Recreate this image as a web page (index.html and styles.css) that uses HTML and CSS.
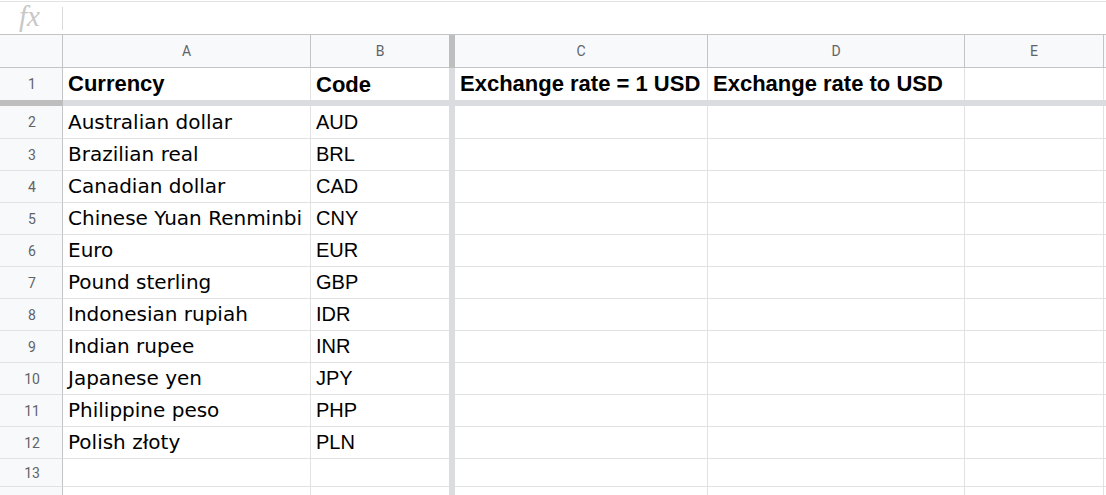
FILE: index.html
```html
<!DOCTYPE html>
<html lang="en">
<head>
  <meta charset="UTF-8">
  <link rel="stylesheet" href="styles.css">
  <title>Currencies</title>
</head>
<body>
  <div class="formula-bar">
    <div class="fx">fx</div>
    <div class="formula-input"></div>
  </div>
  <div class="sheet">
    <!-- column headers -->
    <div class="corner"></div>
    <div class="col-head">A</div>
    <div class="col-head last-frozen">B</div>
    <div class="bar-dark"></div>
    <div class="col-head">C</div>
    <div class="col-head">D</div>
    <div class="col-head">E</div>
    <div class="col-head rest"></div>

    <!-- row 1 -->
    <div class="row-head no-bottom">1</div>
    <div class="cell title no-bottom">Currency</div>
    <div class="cell title code no-bottom last-frozen">Code</div>
    <div class="bar-light"></div>
    <div class="cell title no-bottom">Exchange rate = 1 USD</div>
    <div class="cell title no-bottom">Exchange rate to USD</div>
    <div class="cell no-bottom"></div>
    <div class="cell rest no-bottom"></div>

    <!-- frozen row divider -->
    <div class="hbar-dark"></div>
    <div class="hbar-light"></div>
    <div class="vbar"></div>

    <div class="row-head">2</div>
    <div class="cell name">Australian dollar</div>
    <div class="cell code last-frozen">AUD</div>
    <div class="cell"></div><div class="cell"></div><div class="cell"></div><div class="cell rest"></div>

    <div class="row-head">3</div>
    <div class="cell name">Brazilian real</div>
    <div class="cell code last-frozen">BRL</div>
    <div class="cell"></div><div class="cell"></div><div class="cell"></div><div class="cell rest"></div>

    <div class="row-head">4</div>
    <div class="cell name">Canadian dollar</div>
    <div class="cell code last-frozen">CAD</div>
    <div class="cell"></div><div class="cell"></div><div class="cell"></div><div class="cell rest"></div>

    <div class="row-head">5</div>
    <div class="cell name">Chinese Yuan Renminbi</div>
    <div class="cell code last-frozen">CNY</div>
    <div class="cell"></div><div class="cell"></div><div class="cell"></div><div class="cell rest"></div>

    <div class="row-head">6</div>
    <div class="cell name">Euro</div>
    <div class="cell code last-frozen">EUR</div>
    <div class="cell"></div><div class="cell"></div><div class="cell"></div><div class="cell rest"></div>

    <div class="row-head">7</div>
    <div class="cell name">Pound sterling</div>
    <div class="cell code last-frozen">GBP</div>
    <div class="cell"></div><div class="cell"></div><div class="cell"></div><div class="cell rest"></div>

    <div class="row-head">8</div>
    <div class="cell name">Indonesian rupiah</div>
    <div class="cell code last-frozen">IDR</div>
    <div class="cell"></div><div class="cell"></div><div class="cell"></div><div class="cell rest"></div>

    <div class="row-head">9</div>
    <div class="cell name">Indian rupee</div>
    <div class="cell code last-frozen">INR</div>
    <div class="cell"></div><div class="cell"></div><div class="cell"></div><div class="cell rest"></div>

    <div class="row-head">10</div>
    <div class="cell name">Japanese yen</div>
    <div class="cell code last-frozen">JPY</div>
    <div class="cell"></div><div class="cell"></div><div class="cell"></div><div class="cell rest"></div>

    <div class="row-head">11</div>
    <div class="cell name">Philippine peso</div>
    <div class="cell code last-frozen">PHP</div>
    <div class="cell"></div><div class="cell"></div><div class="cell"></div><div class="cell rest"></div>

    <div class="row-head">12</div>
    <div class="cell name">Polish złoty</div>
    <div class="cell code last-frozen">PLN</div>
    <div class="cell"></div><div class="cell"></div><div class="cell"></div><div class="cell rest"></div>

    <div class="row-head">13</div>
    <div class="cell"></div>
    <div class="cell last-frozen"></div>
    <div class="cell"></div><div class="cell"></div><div class="cell"></div><div class="cell rest"></div>

    <div class="row-head"></div>
    <div class="cell"></div>
    <div class="cell last-frozen"></div>
    <div class="cell"></div><div class="cell"></div><div class="cell"></div><div class="cell rest"></div>
  </div>
</body>
</html>
```

FILE: styles.css
```css
*, ::after, ::before {
  box-sizing: border-box;
}
body {
  margin: 0;
  padding: 0;
  background: #fff;
  width: 1106px;
  height: 495px;
  overflow: hidden;
  font-family: "Liberation Sans", Arial, sans-serif;
  color: #000;
}
.formula-bar {
  display: flex;
  margin-top: 1px;
  height: 34px;
  border-top: 1px solid #e3e3e3;
  border-bottom: 1px solid #c4c4c4;
}
.fx {
  width: 62px;
  padding-left: 19px;
  padding-top: 1px;
  font-family: "Liberation Serif", "DejaVu Serif", serif;
  font-style: italic;
  font-size: 29px;
  color: #c8c8c8;
  line-height: 26px;
}
.formula-input {
  flex: 1;
  margin-top: 5px;
  height: 23px;
  border-left: 1px solid #dadada;
}
.sheet {
  display: grid;
  grid-template-columns: 63px 248px 138px 6px 253px 257px 139px 1fr;
  grid-template-rows: 33px 32px 6px 33px repeat(10, 32px) 28px 32px;
}
.corner, .col-head {
  background: #f8f9fa;
  border-right: 1px solid #c4c4c4;
  border-bottom: 1px solid #c4c4c4;
}
.col-head {
  display: flex;
  align-items: center;
  justify-content: center;
  font-family: Roboto, "Liberation Sans", sans-serif;
  font-size: 14px;
  color: #5f6368;
}
.col-head.last-frozen, .col-head.rest {
  border-right: none;
}
.bar-dark {
  background: #bebebe;
}
.bar-light {
  background: #dadce0;
}
.hbar-dark {
  grid-column: 1;
  background: #bebebe;
}
.hbar-light {
  grid-column: 2 / -1;
  background: #dadce0;
}
.vbar {
  grid-column: 4;
  grid-row: 4 / -1;
  background: #dadce0;
}
.row-head {
  grid-column: 1;
  display: flex;
  align-items: center;
  justify-content: center;
  padding-left: 2px;
  background: #f8f9fa;
  border-right: 1px solid #c4c4c4;
  border-bottom: 1px solid #e2e2e2;
  font-family: Roboto, "Liberation Sans", sans-serif;
  font-size: 14px;
  color: #5f6368;
}
.cell {
  display: flex;
  align-items: flex-end;
  padding: 0 5px 4px;
  border-right: 1px solid #e2e2e2;
  border-bottom: 1px solid #e2e2e2;
  white-space: nowrap;
  overflow: hidden;
}
.cell.last-frozen, .cell.rest {
  border-right: none;
}
.no-bottom {
  border-bottom: none;
}
.cell.title {
  padding-bottom: 4px;
  font-weight: bold;
  font-size: 22px;
  line-height: 25px;
}
.cell.name {
  font-family: "DejaVu Sans", Verdana, sans-serif;
  font-size: 20px;
  line-height: 23px;
}
.cell.code {
  font-family: "Liberation Sans", Arial, sans-serif;
  font-size: 20px;
  line-height: 23px;
}
.cell.title.code {
  font-size: 22px;
}
```
